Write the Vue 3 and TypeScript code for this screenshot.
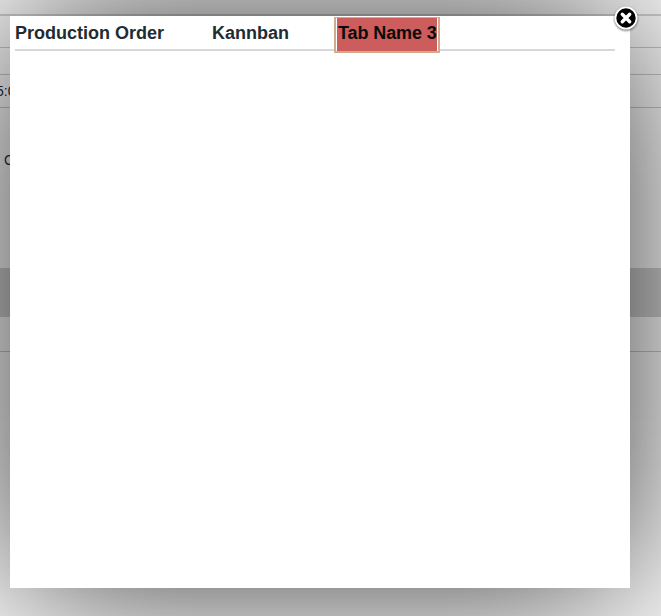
<script setup lang="ts">
const tabs = [
  { name: 'Production Order', cls: 'tab-a' },
  { name: 'Kannban', cls: 'tab-b' },
  { name: 'Tab Name 3', cls: 'tab-c' },
]
</script>

<template>
  <div class="page">
    <div class="under">
      <div class="row r0"></div>
      <div class="row r1"></div>
      <div class="row r2"></div>
      <div class="row r3"><span class="time">5:0</span></div>
      <div class="row r4"><span class="letter">C</span></div>
      <div class="band"></div>
      <div class="row r5"></div>
    </div>
    <div class="dialog">
      <ul class="tabs">
        <li v-for="t in tabs" :key="t.name" :class="['tab', t.cls]"><span class="label">{{ t.name }}</span></li>
      </ul>
      <button class="close" aria-label="Close">
        <svg width="26" height="26" viewBox="0 0 26 26">
          <circle cx="13" cy="13" r="10.6" fill="#000" stroke="#fff" stroke-width="1.8" />
          <path d="M9.3 9.3 L16.7 16.7 M16.7 9.3 L9.3 16.7" stroke="#fff" stroke-width="3.4" stroke-linecap="round" />
        </svg>
      </button>
    </div>
  </div>
</template>

<style>
html, body { margin: 0; padding: 0; background: #fff; }
</style>

<style scoped>
.page {
  position: relative;
  width: 661px;
  height: 616px;
  overflow: hidden;
  font-family: "Liberation Sans", Arial, sans-serif;
  background: #fff;
}
.under {
  display: flex;
  flex-direction: column;
  height: 100%;
  color: #333;
  font-size: 14px;
}
.row { box-sizing: border-box; border-bottom: 1px solid #ccc; }
.r0 { height: 16px; border-bottom: 2px solid #d4d4d4; }
.r1 { height: 32px; }
.r2 { height: 27px; }
.r3 { height: 33px; display: flex; align-items: center; }
.r4 { height: 160px; border-bottom: 0; padding-top: 44px; }
.time { margin-left: -4px; color: #234; }
.letter { margin-left: 4px; }
.band { height: 49px; background: #d3d3d3; }
.r5 { height: 35px; }
.dialog {
  position: absolute;
  left: 10px;
  top: 16px;
  width: 620px;
  height: 572px;
  background: #fff;
  box-shadow: 0 0 160px rgba(0, 0, 0, 0.8);
}
.tabs {
  list-style: none;
  margin: 0 0 0 5px;
  padding: 0;
  width: 600px;
  height: 33px;
  display: flex;
  border-bottom: 2px solid #d5d8dc;
}
.tab {
  font-size: 18px;
  font-weight: 700;
  line-height: 20px;
  height: 34px;
  padding-top: 7px;
  box-sizing: border-box;
  white-space: nowrap;
  color: #1f2d33;
}
.tab-a { width: 197px; }
.tab-b { width: 122px; }
.tab-c {
  width: 106px;
  height: 36px;
  margin-top: 1px;
  padding: 0 1px;
  border: 2px solid #d2aa8c;
  border-top-width: 1px;
  background: #fff;
  color: #0b0b0b;
  letter-spacing: -0.1px;
}
.tab-c .label {
  display: block;
  height: 33px;
  padding: 5px 0 0 1px;
  box-sizing: border-box;
  background: #cd5c5c;
}
.close {
  position: absolute;
  top: -11px;
  right: -9px;
  width: 26px;
  height: 26px;
  padding: 0;
  border: 0;
  background: none;
  filter: drop-shadow(0 1px 1px rgba(0,0,0,.6));
}
.close svg { display: block; }
</style>
